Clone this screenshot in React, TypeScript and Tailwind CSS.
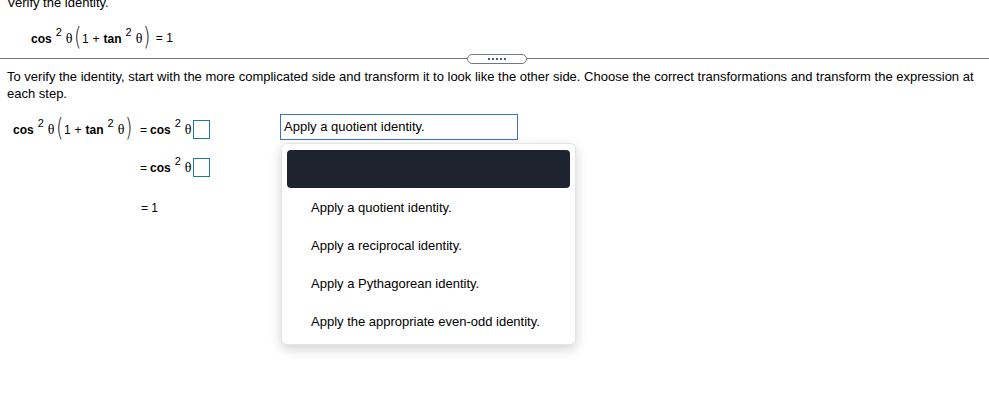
import React from "react";

function Theta() {
  return <span className="font-['Liberation_Serif',serif] font-normal text-[14px]">θ</span>;
}

function Sup() {
  return <span className="relative top-[-7px] text-[11px] font-normal mx-[4px]">2</span>;
}

function Paren({ c }: { c: string }) {
  return <span className="font-['DejaVu_Sans',sans-serif] font-extralight text-[24px] leading-[0] relative top-[2px] scale-x-75 inline-block">{c}</span>;
}

function LeftExpr() {
  return (
    <span className="inline-flex items-baseline whitespace-nowrap">
      <span className="font-bold">cos</span>
      <Sup />
      <Theta />
      <Paren c="(" />
      <span>1</span>
      <span className="mx-[4px]">+</span>
      <span className="font-bold">tan</span>
      <Sup />
      <Theta />
      <Paren c=")" />
    </span>
  );
}

function CosTheta() {
  return (
    <span className="inline-flex items-baseline whitespace-nowrap">
      <span className="font-bold">cos</span>
      <Sup />
      <Theta />
    </span>
  );
}

function Box() {
  return <span className="inline-block w-[17px] h-[19px] border border-[#1b7a9c] ml-[1px] self-center" />;
}

const items = [
  "Apply a quotient identity.",
  "Apply a reciprocal identity.",
  "Apply a Pythagorean identity.",
  "Apply the appropriate even-odd identity.",
];

export default function App() {
  return (
    <div className="relative w-[989px] h-[408px] overflow-hidden bg-white text-black font-['Liberation_Sans',Arial,sans-serif] text-[13px] flex flex-col">
      {/* header */}
      <div className="h-[53px] px-[7px] flex flex-col">
        <div className="mt-[-5px] leading-[16px]">Verify the identity.</div>
        <div className="mt-[17px] pl-[24px] h-[20px] flex items-center text-[12px]">
          <LeftExpr />
          <span className="ml-[4px]">= 1</span>
        </div>
      </div>

      {/* separator */}
      <div className="h-[11px] flex items-center">
        <div className="w-[467px] h-px bg-[#737882]" />
        <div className="w-[60px] h-[10px] rounded-full border border-[#737882] bg-white flex items-center justify-center gap-[2px]">
          {[0, 1, 2, 3, 4].map((i) => (
            <span key={i} className="w-[2px] h-[2px] bg-[#555b66]" />
          ))}
        </div>
        <div className="flex-1 h-px bg-[#737882]" />
      </div>

      {/* instructions */}
      <p className="mt-[4px] px-[7px] leading-[17px] text-[13px]">
        To verify the identity, start with the more complicated side and transform it to look like the other side. Choose the correct transformations and transform the expression at each step.
      </p>

      {/* work area */}
      <div className="mt-[12px] flex">
        <div className="w-[280px] pl-[13px] text-[12px] flex flex-col">
          <div className="mt-[6px] h-[19px] flex items-center">
            <div className="w-[127px] flex items-center"><LeftExpr /></div>
            <span>=</span>
            <span className="ml-[3px] flex items-center"><CosTheta /><Box /></span>
          </div>
          <div className="mt-[19px] h-[19px] flex items-center">
            <div className="w-[127px]" />
            <span>=</span>
            <span className="ml-[3px] flex items-center"><CosTheta /><Box /></span>
          </div>
          <div className="mt-[21px] h-[19px] flex items-center">
            <div className="w-[128px]" />
            <span>= 1</span>
          </div>
        </div>
        <div className="w-[238px] h-[26px] border border-[#3a6fd6] flex items-center pl-[3px] text-[13px]">
          Apply a quotient identity.
        </div>
      </div>

      {/* dropdown menu (overlay) */}
      <div className="absolute left-[281px] top-[143px] w-[295px] h-[202px] rounded-[6px] bg-white border border-[#e3e4e6] shadow-[0_4px_12px_rgba(0,0,0,0.18)] pt-[6px]">
        <div className="mx-[5px] h-[38px] rounded-[4px] bg-[#1e2330]" />
        <div className="mt-[1px]">
          {items.map((t) => (
            <div key={t} className="h-[38px] flex items-center pl-[29px] text-[13px]">
              {t}
            </div>
          ))}
        </div>
      </div>
    </div>
  );
}
